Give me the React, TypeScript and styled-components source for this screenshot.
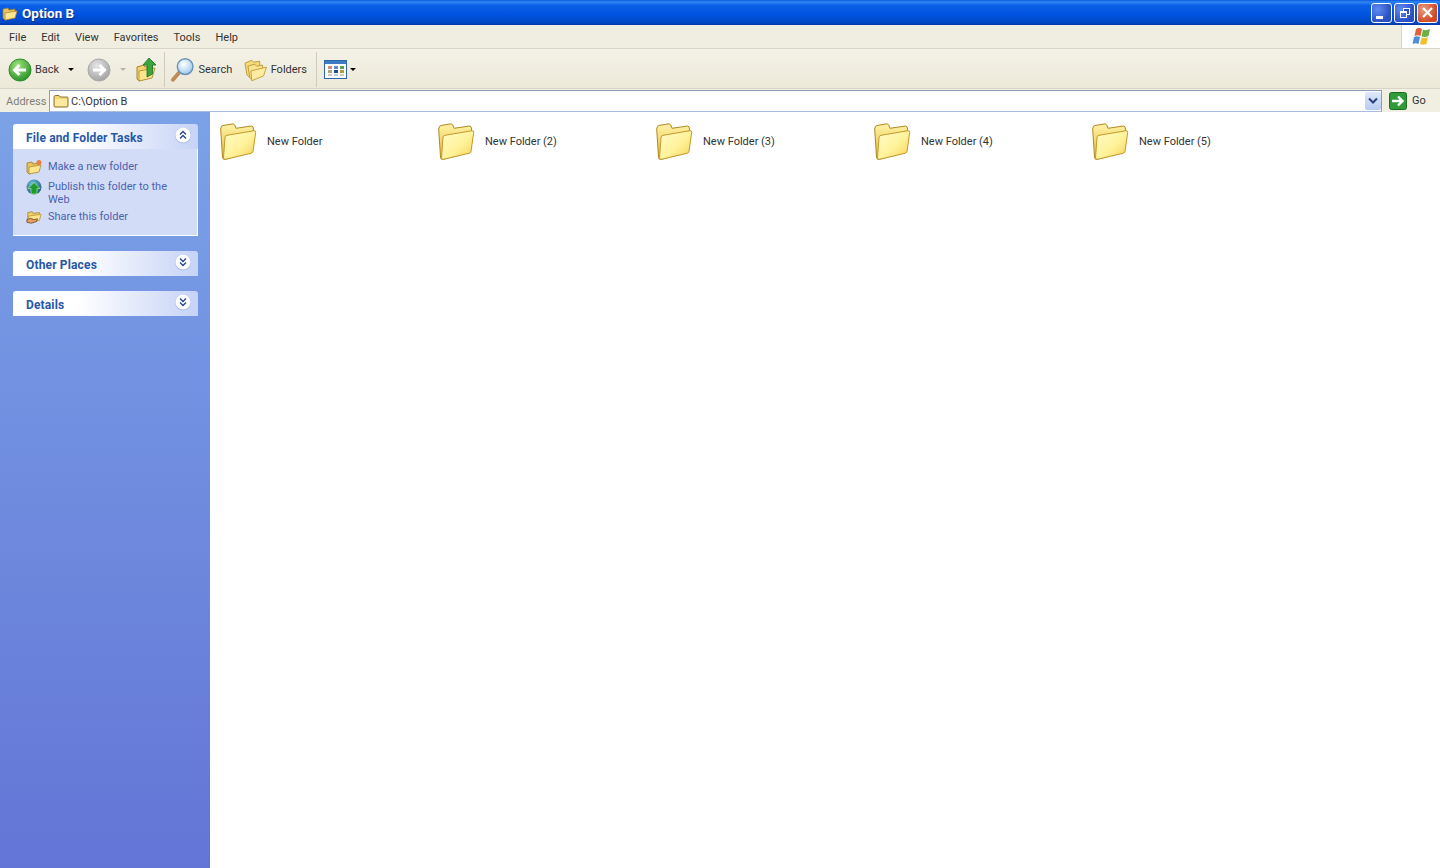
import styled, { createGlobalStyle } from 'styled-components';

const folders = [
  'New Folder',
  'New Folder (2)',
  'New Folder (3)',
  'New Folder (4)',
  'New Folder (5)',
];

const menus = ['File', 'Edit', 'View', 'Favorites', 'Tools', 'Help'];

const BigFolder = () => (
  <svg width="40" height="42" viewBox="0 0 40 42">
    <defs>
      <linearGradient id="bigFront" x1="0" y1="0" x2="1" y2="1">
        <stop offset="0" stopColor="#fffcc8" />
        <stop offset="0.55" stopColor="#fff29a" />
        <stop offset="1" stopColor="#f5d050" />
      </linearGradient>
      <linearGradient id="bigBack" x1="0" y1="0" x2="0" y2="1">
        <stop offset="0" stopColor="#fff3a8" />
        <stop offset="1" stopColor="#e8b830" />
      </linearGradient>
    </defs>
    <path
      d="M1.700 9 Q2 5.700 4 5.500 L14 3.800 Q16 3.800 17 8.300 L32.500 6 Q34.500 6 34.500 9 L33.500 32 L5.500 39.500 Q3.700 39.500 3.500 37 Z"
      fill="url(#bigBack)"
      stroke="#b08820"
      strokeWidth="1"
    />
    <path
      d="M6 17.300 Q6 15.800 8 15.300 L35 10.700 Q37 10.500 36.700 12.500 L34 31.500 Q33.800 32.800 32 33.300 L6.500 39.300 Q4.300 39.700 4.500 37.500 Z"
      fill="url(#bigFront)"
      stroke="#c29a2c"
      strokeWidth="1"
    />
  </svg>
);

const SmallFolder = () => (
  <svg width="16" height="16" viewBox="0 0 16 16">
    <path d="M1 4 Q1 2.500 2.500 2.500 L6 2.500 L7 4 L14 4 Q15 4 15 5 L15 13 Q15 14 14 14 L2 14 Q1 14 1 13 Z" fill="#f3d774" stroke="#8d7430" />
    <rect x="2" y="6" width="12" height="7" rx="1" fill="#fbe9a0" />
  </svg>
);

const OpenFolder = ({ badge }: { badge?: string }) => (
  <svg width="16" height="16" viewBox="0 0 16 16">
    <path d="M1 4 L6 3 L7 5 L13 4 L13 12 L3 15 L1 13 Z" fill="#e9c25c" stroke="#9a7a2c" strokeWidth="0.800" />
    <path d="M3 8 L15 6 L13 13 L3 15 Z" fill="#fde68f" stroke="#b08d33" strokeWidth="0.800" />
    {badge && <circle cx="13" cy="3.500" r="2.500" fill={badge} />}
  </svg>
);

const SharedFolder = () => (
  <svg width="16" height="16" viewBox="0 0 18 16">
    <path d="M2 3 L7 2 L8 4 L15 3 L15 10 L2 12 Z" fill="#f0cd68" stroke="#9a7a2c" strokeWidth="0.800" />
    <path d="M3 7 L17 5 L15 12 L2 13 Z" fill="#fde68f" stroke="#b08d33" strokeWidth="0.800" />
    <path d="M1 11 Q5 8 9 11 L13 10 L12 13 L6 15 L1 14 Z" fill="#e8a060" stroke="#5c3c18" strokeWidth="0.800" />
  </svg>
);

const Globe = () => (
  <svg width="16" height="16" viewBox="0 0 16 16">
    <defs>
      <radialGradient id="globeFill" cx="0.400" cy="0.300" r="0.800">
        <stop offset="0" stopColor="#6fc4e0" />
        <stop offset="1" stopColor="#14506e" />
      </radialGradient>
    </defs>
    <circle cx="8" cy="8" r="7.500" fill="url(#globeFill)" />
    <path d="M8 3.500 L14 9.500 L11 9.500 L11 15 L5 15 L5 9.500 L2 9.500 Z" fill="#1f9a2c" stroke="#c6efc0" strokeWidth="0.600" />
  </svg>
);

const NavArrow = ({ dim }: { dim?: boolean }) => (
  <svg width="24" height="24" viewBox="0 0 24 24">
    <defs>
      <radialGradient id={dim ? 'navGrey' : 'navGreen'} cx="0.400" cy="0.300" r="0.800">
        <stop offset="0" stopColor={dim ? '#e6e6e6' : '#9fe37c'} />
        <stop offset="1" stopColor={dim ? '#9a9a9a' : '#1d8a1f'} />
      </radialGradient>
    </defs>
    <circle cx="12" cy="12" r="11" fill={`url(#${dim ? 'navGrey' : 'navGreen'})`} stroke={dim ? '#a8a8a8' : '#2c8a2a'} />
    <path
      d={dim ? 'M6 12 H17 M12.500 7 L17.500 12 L12.500 17' : 'M18 12 H7 M11.500 7 L6.500 12 L11.500 17'}
      fill="none"
      stroke="#fff"
      strokeWidth="3"
    />
  </svg>
);

const UpIcon = () => (
  <svg width="24" height="26" viewBox="0 0 24 26">
    <path d="M3 10 L10 8 L11 10 L18 9 L18 20 L5 24 L3 22 Z" fill="#f3d36e" stroke="#a88530" />
    <path d="M5 14 L21 11 L18 21 L5 24 Z" fill="#fce48e" stroke="#b8963a" />
    <path d="M15 1 L22 8 L18.500 8 L18.500 17 L13 20 L13 8 L9 8 Z" fill="#3aa53a" stroke="#1b701f" strokeWidth="0.800" />
  </svg>
);

const SearchIcon = () => (
  <svg width="26" height="26" viewBox="0 0 26 26">
    <defs>
      <radialGradient id="lens" cx="0.400" cy="0.350" r="0.700">
        <stop offset="0" stopColor="#ffffff" />
        <stop offset="1" stopColor="#9cc7ec" />
      </radialGradient>
    </defs>
    <path d="M9 16 L3 23" stroke="#c08a5a" strokeWidth="4" strokeLinecap="round" />
    <circle cx="15.500" cy="9.500" r="8" fill="url(#lens)" stroke="#6d94b8" strokeWidth="1.500" />
  </svg>
);

const FoldersIcon = () => (
  <svg width="24" height="24" viewBox="0 0 24 24">
    <path d="M1 5 L8 2 L10 4 L16 3 L16 14 L6 20 L3 17 Z" fill="#f5db7c" stroke="#c29c38" />
    <path d="M4 8 L11 6 L13 8 L19 7 L19 17 L8 22 L6 20 Z" fill="#f8e48f" stroke="#c29c38" />
    <path d="M7 13 L23 9 L20 18 L8 23 Z" fill="#fdeb9f" stroke="#c6a23c" />
  </svg>
);

const ViewsIcon = () => (
  <svg width="24" height="20" viewBox="0 0 24 20">
    <rect x="0.500" y="0.500" width="22" height="18" fill="#fff" stroke="#2f66a8" />
    <rect x="1" y="1" width="21" height="3" fill="#3c7cc4" />
    <rect x="4" y="6" width="4" height="3" fill="#c98d7a" />
    <rect x="10" y="6" width="4" height="3" fill="#5f8ec4" />
    <rect x="16" y="6" width="4" height="3" fill="#5f9a50" />
    <rect x="4" y="10" width="4" height="3" fill="#b0a08c" />
    <rect x="10" y="10" width="4" height="3" fill="#1d4f86" />
    <rect x="16" y="10" width="4" height="3" fill="#a8a040" />
    <rect x="4" y="14" width="4" height="2" fill="#d0c8b8" />
    <rect x="10" y="14" width="4" height="2" fill="#c0c8d8" />
    <rect x="16" y="14" width="4" height="2" fill="#c8d0b0" />
  </svg>
);

const GoIcon = () => (
  <svg width="18" height="18" viewBox="0 0 18 18">
    <rect x="0.500" y="0.500" width="17" height="17" rx="2" fill="#2f9a38" stroke="#1c6e24" />
    <path d="M3 9 H13 M9 4.500 L13.500 9 L9 13.500" fill="none" stroke="#fff" strokeWidth="2.400" />
  </svg>
);

const XpFlag = () => (
  <svg width="22" height="20" viewBox="0 0 22 20">
    <path d="M6 2 Q9 0 12 2 L10.500 9 Q7.500 7.500 4.500 9 Z" fill="#e0603a" />
    <path d="M13 2.500 Q16 4 20 2 L18.500 9 Q15 10.500 11.500 9.500 Z" fill="#6cb044" />
    <path d="M4 10 Q7 8.500 10 10 L8.500 17 Q5.500 15.500 2.500 17 Z" fill="#4a8fd8" />
    <path d="M11.500 10.500 Q15 11.500 18 10 L16.500 17 Q13 18.500 10 17 Z" fill="#f2c02e" />
  </svg>
);

const Chevrons = ({ up }: { up?: boolean }) => (
  <svg width="18" height="18" viewBox="0 0 18 18">
    <circle cx="9" cy="9.500" r="8" fill="#8ea2d8" opacity="0.500" />
    <circle cx="9" cy="9" r="7.500" fill="#fff" />
    <path
      d={up ? 'M6 8.500 L9 5.500 L12 8.500 M6 12.500 L9 9.500 L12 12.500' : 'M6 5.500 L9 8.500 L12 5.500 M6 9.500 L9 12.500 L12 9.500'}
      fill="none"
      stroke="#22408c"
      strokeWidth="1.300"
    />
  </svg>
);

const Caret = styled.span<{ $dim?: boolean }>`
  width: 0;
  height: 0;
  border-left: 3px solid transparent;
  border-right: 3px solid transparent;
  border-top: 3px solid ${({ $dim }) => ($dim ? '#b5b5ad' : '#000')};
`;

const App = () => (
  <Page>
    <GlobalStyle />
    <TitleBar>
      <TitleLeft>
        <OpenFolder />
        <TitleText>Option B</TitleText>
      </TitleLeft>
      <WindowButtons>
        <WindowButton>
          <MinGlyph />
        </WindowButton>
        <WindowButton>
          <RestoreGlyph />
        </WindowButton>
        <WindowButton $close>
          <svg width="13" height="13" viewBox="0 0 13 13">
            <path d="M2 2 L11 11 M11 2 L2 11" stroke="#fff" strokeWidth="2.200" />
          </svg>
        </WindowButton>
      </WindowButtons>
    </TitleBar>

    <MenuBar>
      <MenuItems>
        {menus.map((menu) => (
          <MenuItem key={menu}>{menu}</MenuItem>
        ))}
      </MenuItems>
      <FlagBox>
        <XpFlag />
      </FlagBox>
    </MenuBar>

    <ToolBar>
      <ToolGroup $width={165} $pad={8}>
        <NavArrow />
        <ToolLabel>Back</ToolLabel>
        <Caret />
        <Spacer $width={13} />
        <NavArrow dim />
        <Spacer $width={9} />
        <Caret $dim />
        <Spacer $width={8} />
        <UpIcon />
      </ToolGroup>
      <ToolGroup $width={152} $pad={5}>
        <SearchIcon />
        <ToolLabel>Search</ToolLabel>
        <Spacer $width={3} />
        <FoldersIcon />
        <ToolLabel>Folders</ToolLabel>
      </ToolGroup>
      <ToolGroup $width={60} $pad={7} $last>
        <ViewsIcon />
        <Spacer $width={2} />
        <Caret />
      </ToolGroup>
    </ToolBar>

    <AddressBar>
      <AddressLabel>Address</AddressLabel>
      <AddressField>
        <SmallFolder />
        <AddressText>C:\Option B</AddressText>
        <DropButton>
          <svg width="10" height="8" viewBox="0 0 10 8">
            <path d="M1 1.500 L5 5.500 L9 1.500" fill="none" stroke="#2a3f7c" strokeWidth="2" />
          </svg>
        </DropButton>
      </AddressField>
      <GoButton>
        <GoIcon />
        Go
      </GoButton>
    </AddressBar>

    <Body>
      <SideBar>
        <Panel>
          <PanelHeader>
            <PanelTitle>File and Folder Tasks</PanelTitle>
            <Chevrons up />
          </PanelHeader>
          <PanelBody>
            <TaskRow>
              <TaskIcon>
                <OpenFolder badge="#e8803a" />
              </TaskIcon>
              <TaskLink>Make a new folder</TaskLink>
            </TaskRow>
            <TaskRow>
              <TaskIcon>
                <Globe />
              </TaskIcon>
              <TaskLink>Publish this folder to the Web</TaskLink>
            </TaskRow>
            <TaskRow>
              <TaskIcon>
                <SharedFolder />
              </TaskIcon>
              <TaskLink>Share this folder</TaskLink>
            </TaskRow>
          </PanelBody>
        </Panel>
        <Panel>
          <PanelHeader>
            <PanelTitle>Other Places</PanelTitle>
            <Chevrons />
          </PanelHeader>
        </Panel>
        <Panel>
          <PanelHeader>
            <PanelTitle>Details</PanelTitle>
            <Chevrons />
          </PanelHeader>
        </Panel>
      </SideBar>
      <FolderGrid>
        {folders.map((name) => (
          <FolderTile key={name}>
            <BigFolder />
            <FolderName>{name}</FolderName>
          </FolderTile>
        ))}
      </FolderGrid>
    </Body>
  </Page>
);

export default App;

const GlobalStyle = createGlobalStyle`
  html, body {
    margin: 0;
    height: 100%;
    overflow: hidden;
  }
  * {
    box-sizing: border-box;
  }
  body {
    font-family: Roboto, "Noto Sans", sans-serif;
    font-size: 11px;
    color: #000;
  }
`;

const Page = styled.div`
  display: flex;
  flex-direction: column;
  width: 1440px;
  height: 868px;
  overflow: hidden;
`;

const TitleBar = styled.div`
  display: flex;
  align-items: center;
  justify-content: space-between;
  flex: 0 0 25px;
  padding: 0 2px;
  background: linear-gradient(
    180deg,
    #0a5bd8 0%,
    #2f86f4 8%,
    #0a5fe6 22%,
    #0053e0 60%,
    #0047c4 90%,
    #003aa8 100%
  );
`;

const TitleLeft = styled.div`
  display: flex;
  align-items: center;
  gap: 4px;
`;

const TitleText = styled.span`
  font-size: 13.500px;
  font-weight: 700;
  color: #fff;
  text-shadow: 1px 1px 0 #0f2f8c;
`;

const WindowButtons = styled.div`
  display: flex;
  gap: 2px;
`;

const WindowButton = styled.div<{ $close?: boolean }>`
  position: relative;
  width: 21px;
  height: 20px;
  display: flex;
  align-items: center;
  justify-content: center;
  border: 1px solid #fff;
  border-radius: 3px;
  background: ${({ $close }) =>
    $close
      ? 'radial-gradient(circle at 30% 30%, #eb9a80, #cf4a24 70%)'
      : 'radial-gradient(circle at 30% 30%, #5f8cf0, #2a4fc4 70%)'};
`;

const MinGlyph = styled.span`
  position: absolute;
  left: 4px;
  bottom: 3px;
  width: 7px;
  height: 3px;
  background: #fff;
`;

const RestoreGlyph = styled.span`
  width: 7px;
  height: 7px;
  margin-top: 3px;
  margin-right: 2px;
  border: 1px solid #fff;
  border-top-width: 2px;
  box-shadow: 3px -3px 0 -1px #2a4fc4, 3px -3px 0 0 #fff;
`;

const MenuBar = styled.div`
  display: flex;
  align-items: stretch;
  justify-content: space-between;
  flex: 0 0 24px;
  background: #f0eee1;
  border-bottom: 1px solid #d8d5c6;
`;

const MenuItems = styled.div`
  display: flex;
  align-items: center;
  padding: 2px 0 0 3px;
`;

const MenuItem = styled.span`
  padding: 0 6px;
  margin-right: 3px;
  color: #333;
`;

const FlagBox = styled.div`
  display: flex;
  align-items: center;
  justify-content: center;
  width: 39px;
  background: #fff;
  border-left: 1px solid #d8d5c6;
`;

const ToolBar = styled.div`
  display: flex;
  align-items: stretch;
  flex: 0 0 40px;
  background: linear-gradient(180deg, #f4f2e7 0%, #ece9d9 100%);
  border-bottom: 1px solid #d8d5c6;
`;

const ToolGroup = styled.div<{ $width: number; $pad: number; $last?: boolean }>`
  display: flex;
  align-items: center;
  width: ${({ $width }) => $width}px;
  padding-left: ${({ $pad }) => $pad}px;
  margin: 3px 0 1px;
  border-right: ${({ $last }) => ($last ? '0' : '1px solid #cfccbd')};
`;

const Spacer = styled.span<{ $width: number }>`
  flex: 0 0 ${({ $width }) => $width}px;
`;

const ToolLabel = styled.span`
  margin: 0 9px 0 3px;
  color: #333;
`;

const AddressBar = styled.div`
  display: flex;
  align-items: center;
  flex: 0 0 23px;
  background: #f1efe2;
`;

const AddressLabel = styled.span`
  width: 49px;
  padding: 2px 0 0 6px;
  color: #7f7f78;
`;

const AddressField = styled.div`
  display: flex;
  align-items: center;
  gap: 2px;
  flex: 1;
  height: 22px;
  margin-top: 1px;
  padding-left: 3px;
  background: #fff;
  border: 1px solid #8d9db5;
  border-bottom-color: #a9bde0;
`;

const AddressText = styled.span`
  flex: 1;
  color: #333;
`;

const DropButton = styled.div`
  display: flex;
  align-items: center;
  justify-content: center;
  width: 16px;
  height: 18px;
  border-radius: 2px;
  background: linear-gradient(180deg, #dfe8fb, #b8cbf2);
`;

const GoButton = styled.div`
  display: flex;
  align-items: center;
  gap: 5px;
  width: 58px;
  padding-left: 7px;
  color: #333;
`;

const Body = styled.div`
  display: flex;
  flex: 1;
  min-height: 0;
`;

const SideBar = styled.aside`
  display: flex;
  flex-direction: column;
  gap: 15px;
  flex: 0 0 210px;
  padding: 12px 12px 0 13px;
  background: linear-gradient(180deg, #7ba2e7 0%, #6375d6 100%);
`;

const Panel = styled.section`
  display: flex;
  flex-direction: column;
`;

const PanelHeader = styled.div`
  display: flex;
  align-items: center;
  justify-content: space-between;
  height: 25px;
  padding: 0 6px 0 13px;
  border-radius: 3px 3px 0 0;
  background: linear-gradient(90deg, #fff 0%, #fff 35%, #c6d3f7 100%);

  svg {
    margin-bottom: 3px;
  }
`;

const PanelTitle = styled.span`
  padding-top: 2px;
  font-size: 12px;
  font-weight: 700;
  letter-spacing: 0.150px;
  color: #2757a8;
`;

const PanelBody = styled.div`
  display: flex;
  flex-direction: column;
  gap: 4px;
  height: 87px;
  padding: 10px 10px 0 13px;
  background: #d3dcf6;
  border: 1px solid #fff;
  border-width: 0 1px 1px 0;
`;

const TaskRow = styled.div`
  display: flex;
  align-items: flex-start;
  gap: 6px;
`;

const TaskIcon = styled.span`
  display: flex;
  flex: 0 0 16px;
`;

const TaskLink = styled.span`
  margin: 1px 0 -1px;
  line-height: 13px;
  color: #4a62b0;
`;

const FolderGrid = styled.div`
  display: grid;
  grid-template-columns: repeat(auto-fill, 218px);
  grid-auto-rows: 58px;
  flex: 1;
  padding: 8px 0 0 9px;
  background: #fff;
`;

const FolderTile = styled.div`
  display: flex;
  align-items: center;
  gap: 8px;
  height: 42px;
`;

const FolderName = styled.span`
  color: #333;
`;
